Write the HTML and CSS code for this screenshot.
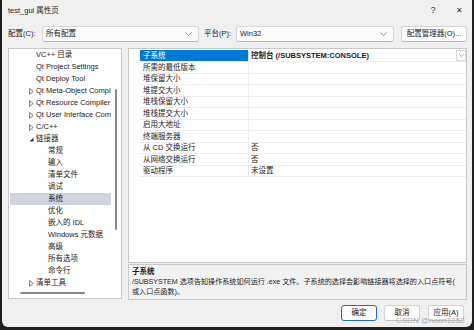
FILE: index.html
```html
<!DOCTYPE html>
<html lang="zh-CN">
<head>
    <meta charset="UTF-8">
    <meta name="viewport" content="width=device-width, initial-scale=1.0">
    <title>test_gui 属性页</title>
    <link rel="stylesheet" href="styles.css">
</head>
<body>
    <div class="window">
        <div class="titlebar">
            <span class="title">test_gui 属性页</span>
            <span class="tb-btn">?</span>
            <span class="tb-btn tb-close">✕</span>
        </div>

        <div class="toolbar">
            <span class="label label-config">配置(C):</span>
            <div class="combo combo-config">
                <span>所有配置</span>
                <svg class="chevron" width="7" height="4" viewBox="0 0 7 4"><polyline points="0.5,0.5 3.5,3.5 6.5,0.5" fill="none" stroke="#8a8a8a" stroke-width="0.9"/></svg>
            </div>
            <span class="label label-platform">平台(P):</span>
            <div class="combo combo-platform">
                <span>Win32</span>
                <svg class="chevron" width="7" height="4" viewBox="0 0 7 4"><polyline points="0.5,0.5 3.5,3.5 6.5,0.5" fill="none" stroke="#8a8a8a" stroke-width="0.9"/></svg>
            </div>
            <button class="btn btn-manager">配置管理器(O)...</button>
        </div>

        <div class="content">
            <div class="tree">
                <div class="tree-list">
                    <div class="node"><span class="twisty"></span>VC++ 目录</div>
                    <div class="node"><span class="twisty"></span>Qt Project Settings</div>
                    <div class="node"><span class="twisty"></span>Qt Deploy Tool</div>
                    <div class="node"><span class="twisty"><svg width="5" height="7" viewBox="0 0 5 7"><polygon points="0.6,0.6 4.2,3.5 0.6,6.4" fill="none" stroke="#555" stroke-width="0.8"/></svg></span>Qt Meta-Object Compiler</div>
                    <div class="node"><span class="twisty"><svg width="5" height="7" viewBox="0 0 5 7"><polygon points="0.6,0.6 4.2,3.5 0.6,6.4" fill="none" stroke="#555" stroke-width="0.8"/></svg></span>Qt Resource Compiler</div>
                    <div class="node"><span class="twisty"><svg width="5" height="7" viewBox="0 0 5 7"><polygon points="0.6,0.6 4.2,3.5 0.6,6.4" fill="none" stroke="#555" stroke-width="0.8"/></svg></span>Qt User Interface Compiler</div>
                    <div class="node"><span class="twisty"><svg width="5" height="7" viewBox="0 0 5 7"><polygon points="0.6,0.6 4.2,3.5 0.6,6.4" fill="none" stroke="#555" stroke-width="0.8"/></svg></span>C/C++</div>
                    <div class="node"><span class="twisty"><svg width="5" height="5" viewBox="0 0 5 5"><polygon points="4.5,0.5 4.5,4.5 0.5,4.5" fill="#333"/></svg></span>链接器</div>
                    <div class="node child">常规</div>
                    <div class="node child">输入</div>
                    <div class="node child">清单文件</div>
                    <div class="node child">调试</div>
                    <div class="node child selected">系统</div>
                    <div class="node child">优化</div>
                    <div class="node child">嵌入的 IDL</div>
                    <div class="node child">Windows 元数据</div>
                    <div class="node child">高级</div>
                    <div class="node child">所有选项</div>
                    <div class="node child">命令行</div>
                    <div class="node"><span class="twisty"><svg width="5" height="7" viewBox="0 0 5 7"><polygon points="0.6,0.6 4.2,3.5 0.6,6.4" fill="none" stroke="#555" stroke-width="0.8"/></svg></span>清单工具</div>
                </div>
                <div class="vscroll"></div>
                <div class="hscroll"></div>
            </div>

            <div class="right">
                <div class="grid">
                    <div class="prop-row selected">
                        <div class="prop-name">子系统</div>
                        <div class="prop-value bold">控制台 (/SUBSYSTEM:CONSOLE)
                            <span class="drop"><svg width="5" height="3" viewBox="0 0 5 3"><polyline points="0.4,0.4 2.5,2.6 4.6,0.4" fill="none" stroke="#8a8a8a" stroke-width="0.8"/></svg></span>
                        </div>
                    </div>
                    <div class="prop-row"><div class="prop-name">所需的最低版本</div><div class="prop-value"></div></div>
                    <div class="prop-row"><div class="prop-name">堆保留大小</div><div class="prop-value"></div></div>
                    <div class="prop-row"><div class="prop-name">堆提交大小</div><div class="prop-value"></div></div>
                    <div class="prop-row"><div class="prop-name">堆栈保留大小</div><div class="prop-value"></div></div>
                    <div class="prop-row"><div class="prop-name">堆栈提交大小</div><div class="prop-value"></div></div>
                    <div class="prop-row"><div class="prop-name">启用大地址</div><div class="prop-value"></div></div>
                    <div class="prop-row"><div class="prop-name">终端服务器</div><div class="prop-value"></div></div>
                    <div class="prop-row"><div class="prop-name">从 CD 交换运行</div><div class="prop-value">否</div></div>
                    <div class="prop-row"><div class="prop-name">从网络交换运行</div><div class="prop-value">否</div></div>
                    <div class="prop-row"><div class="prop-name">驱动程序</div><div class="prop-value">未设置</div></div>
                </div>
                <div class="desc">
                    <div class="desc-title">子系统</div>
                    <div class="desc-text">/SUBSYSTEM 选项告知操作系统如何运行 .exe 文件。子系统的选择会影响链接器将选择的入口点符号(<br>或入口点函数)。</div>
                </div>
            </div>
        </div>

        <div class="footer">
            <button class="btn btn-default">确定</button>
            <button class="btn">取消</button>
            <button class="btn btn-apply">应用(A)</button>
        </div>

        <div class="watermark">CSDN @noon1252</div>
    </div>
</body>
</html>
```

FILE: styles.css
```css
:root {
    --desktop: #1f1f1f;
    --window: #f0f0f0;
    --font: #1b1b1b;
    --border: #c9c9c9;
    --panel: #ffffff;
    --line: #ededed;
    --tree-select: #d1d4df;
    --grid-select: #0078d7;
    --scroll: #8a8a8a;
    --accent: #1a6fc4;
}

*,
*::before,
*::after {
    box-sizing: border-box;
    padding: 0;
    margin: 0;
}

body {
    background-color: var(--desktop);
    color: var(--font);
    font-family: "Liberation Sans", "Noto Sans CJK SC", sans-serif;
    font-size: 7.5px;
    line-height: 1;
    width: 474px;
    height: 330px;
    overflow: hidden;
}

button {
    color: inherit;
    font-family: inherit;
    font-size: inherit;
    line-height: inherit;
    cursor: pointer;
}

.window {
    position: relative;
    width: 470px;
    height: 327px;
    margin-left: 2px;
    padding: 0 5px 0 6px;
    background-color: var(--window);
    border-radius: 0 0 6px 6px;
}

/* title bar */
.titlebar {
    display: flex;
    align-items: center;
    height: 21px;
    margin: 0 -5px 0 0;
}

.title {
    flex: 1;
}

.tb-btn {
    width: 26px;
    text-align: center;
    font-size: 9px;
    color: #333;
}

.tb-close {
    font-size: 8px;
}

/* config row */
.toolbar {
    display: flex;
    align-items: center;
    height: 17px;
    margin-top: 4px;
}

.label {
    white-space: nowrap;
}

.label-config {
    width: 34px;
}

.label-platform {
    width: 32px;
    margin-left: 5px;
}

.combo {
    display: flex;
    align-items: center;
    justify-content: space-between;
    height: 16px;
    padding: 0 6px 0 3px;
    background-color: #fbfbfb;
    border: 1px solid #d6d6d6;
    border-bottom-color: #b9b9b9;
    border-radius: 3px;
}

.combo-config {
    width: 157px;
}

.combo-platform {
    width: 158px;
}

.btn {
    height: 16px;
    background-color: #fdfdfd;
    border: 1px solid #d3d3d3;
    border-bottom-color: #bdbdbd;
    border-radius: 3px;
    white-space: nowrap;
}

.btn-manager {
    width: 66px;
    margin-left: 7px;
}

/* main area */
.content {
    display: flex;
    gap: 6px;
    height: 252px;
    margin-top: 6px;
}

.tree {
    position: relative;
    width: 114px;
    height: 251px;
    background-color: var(--panel);
    border: 1px solid var(--border);
    overflow: hidden;
}

.tree-list {
    width: 101px;
    margin-left: 1px;
    overflow: hidden;
}

.node {
    display: flex;
    align-items: center;
    height: 12px;
    padding-left: 17px;
    white-space: nowrap;
}

.node.child {
    padding-left: 38px;
}

.node.selected {
    background-color: var(--tree-select);
}

.twisty {
    display: inline-flex;
    align-items: center;
    flex: none;
    width: 9px;
    height: 12px;
    padding-left: 2px;
}

.vscroll {
    position: absolute;
    left: 106px;
    top: 40px;
    width: 2px;
    height: 141px;
    background-color: var(--scroll);
    border-radius: 1px;
}

.hscroll {
    position: absolute;
    left: 11px;
    top: 243px;
    width: 65px;
    height: 2px;
    background-color: var(--scroll);
    border-radius: 1px;
}

.right {
    display: flex;
    flex-direction: column;
    gap: 1px;
    flex: 1;
}

.grid {
    height: 215px;
    padding: 1px 0 0 11px;
    background-color: var(--panel);
    border: 1px solid var(--border);
}

.prop-row {
    display: flex;
    height: 11.5px;
    border-bottom: 1px solid var(--line);
}

.prop-name {
    display: flex;
    align-items: center;
    width: 108px;
    padding-left: 3px;
    white-space: nowrap;
}

.prop-value {
    display: flex;
    align-items: center;
    flex: 1;
    padding-left: 2px;
    border-left: 1px solid var(--line);
    white-space: nowrap;
}

.prop-row.selected {
    height: 12px;
}

.prop-row.selected .prop-name {
    background-color: var(--grid-select);
    color: #fff;
}

.bold {
    font-weight: bold;
}

.drop {
    display: flex;
    align-items: center;
    justify-content: center;
    width: 10px;
    height: 11px;
    margin-left: auto;
    border: 1px solid #dadada;
    background-color: #fff;
}

.desc {
    flex: 1;
    padding: 2px 3px 0;
    background-color: #f2f2f2;
    border: 1px solid var(--border);
    line-height: 10px;
}

.desc-title {
    font-weight: bold;
}

.desc-text {
    font-size: 7.1px;
    white-space: nowrap;
}

/* buttons */
.footer {
    display: flex;
    justify-content: flex-end;
    gap: 7px;
    margin-top: 5px;
    padding-right: 3px;
}

.footer .btn {
    width: 36px;
    height: 16px;
}

.btn-default {
    border: 1px solid var(--accent);
}

.btn-apply {
    margin-left: 1px;
}

.watermark {
    position: absolute;
    left: 394px;
    top: 317px;
    font-size: 8px;
    color: rgba(150, 150, 150, 0.8);
    white-space: nowrap;
}
```
